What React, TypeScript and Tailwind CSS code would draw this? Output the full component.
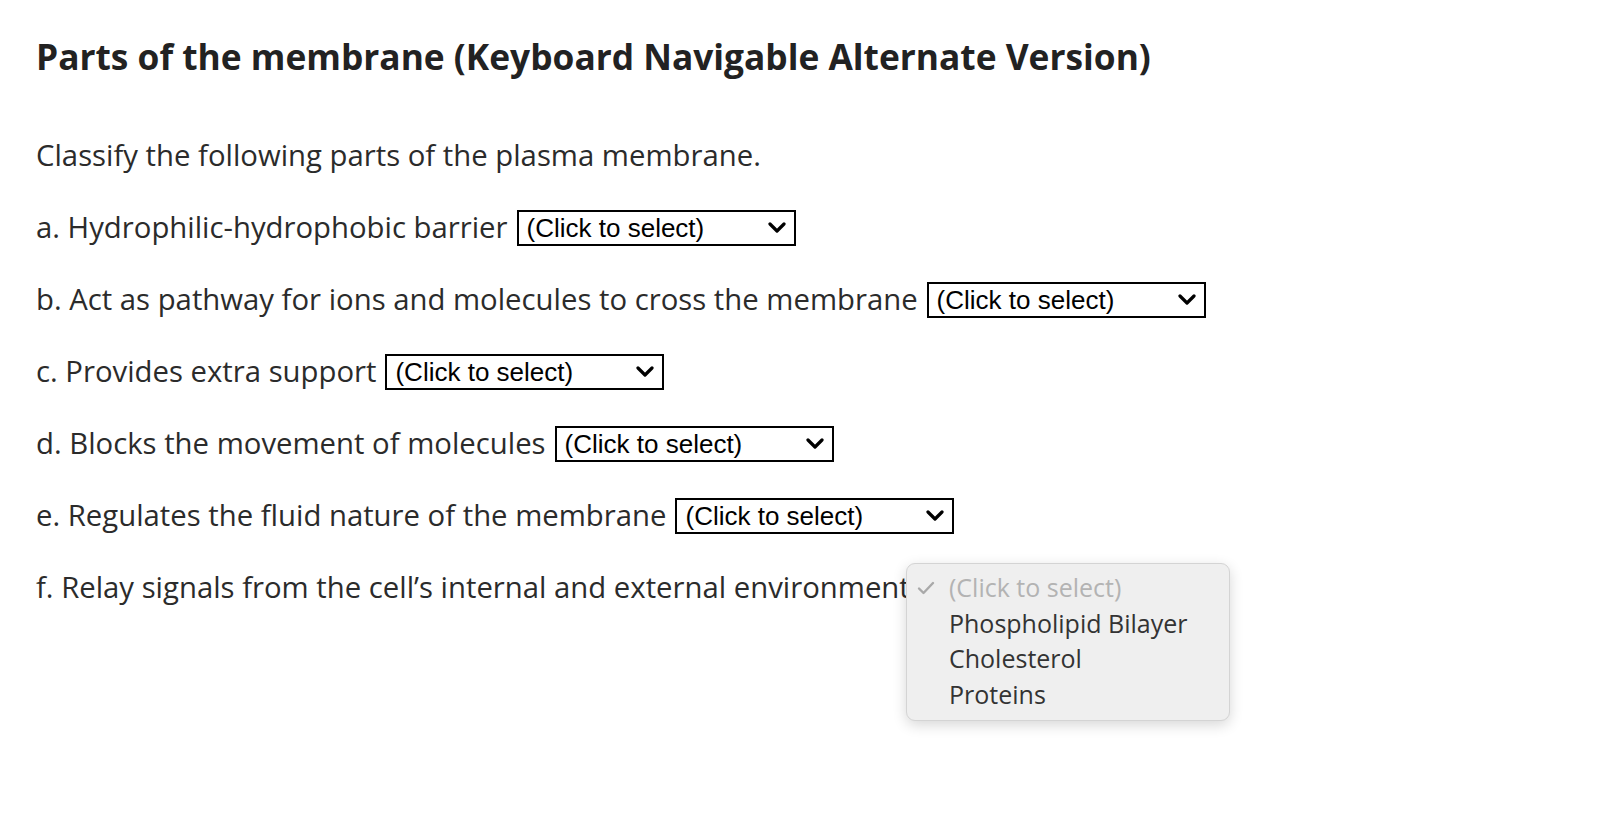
import React from 'react';

const rows = [
    'a. Hydrophilic-hydrophobic barrier',
    'b. Act as pathway for ions and molecules to cross the membrane',
    'c. Provides extra support',
    'd. Blocks the movement of molecules',
    'e. Regulates the fluid nature of the membrane',
    'f. Relay signals from the cell\u2019s internal and external environment',
];

const options = ['Phospholipid Bilayer', 'Cholesterol', 'Proteins'];

const SelectBox: React.FC = () => (
    <div className="ml-[9px] w-[279px] h-[36px] border-2 border-black bg-white flex items-center justify-between pl-[8px] pr-[8px] shrink-0">
        <span className="text-[26px] text-black font-['Liberation_Sans',Arial,sans-serif] leading-none">(Click to select)</span>
        <svg width="18" height="12" viewBox="0 0 18 12">
            <path d="M2 2 L9 9 L16 2" fill="none" stroke="black" strokeWidth="3.2" strokeLinecap="round" strokeLinejoin="round" />
        </svg>
    </div>
);

export default function App() {
    return (
        <div className="relative w-[1602px] h-[816px] bg-white font-['Open_Sans','Noto_Sans',sans-serif] text-[#2b2b2b]">
            <div className="pl-[36px] pt-[34px]">
                <h1 className="text-[35.3px] font-bold leading-[44px] text-[#222]">
                    Parts of the membrane (Keyboard Navigable Alternate Version)
                </h1>
                <p className="mt-[55px] text-[29.3px] leading-[44px]">Classify the following parts of the plasma membrane.</p>
                <div className="mt-[33px] flex flex-col gap-[36px]">
                    {rows.map((r) => (
                        <div key={r} className="flex items-center h-[36px]">
                            <span className="text-[29.3px] leading-none whitespace-nowrap">{r}</span>
                            <SelectBox />
                        </div>
                    ))}
                </div>
            </div>

            {/* open dropdown for row f */}
            <div className="absolute left-[906px] top-[563px] w-[324px] h-[158px] rounded-[9px] border border-[#d4d4d4] bg-[#efefef] shadow-[0_4px_14px_rgba(0,0,0,0.16)] pt-[6px]">
                <div className="flex items-center h-[35.5px]">
                    <svg width="20" height="16" viewBox="0 0 20 16" className="ml-[9px] mr-[13px]">
                        <path d="M3 8.5 L7.5 13 L17 3" fill="none" stroke="#a9a9a9" strokeWidth="2.4" strokeLinecap="round" strokeLinejoin="round" />
                    </svg>
                    <span className="text-[25px] text-[#b3b3b3] leading-none">(Click to select)</span>
                </div>
                {options.map((o) => (
                    <div key={o} className="flex items-center h-[35.5px] pl-[42px]">
                        <span className="text-[25px] text-[#333] leading-none">{o}</span>
                    </div>
                ))}
            </div>
        </div>
    );
}
